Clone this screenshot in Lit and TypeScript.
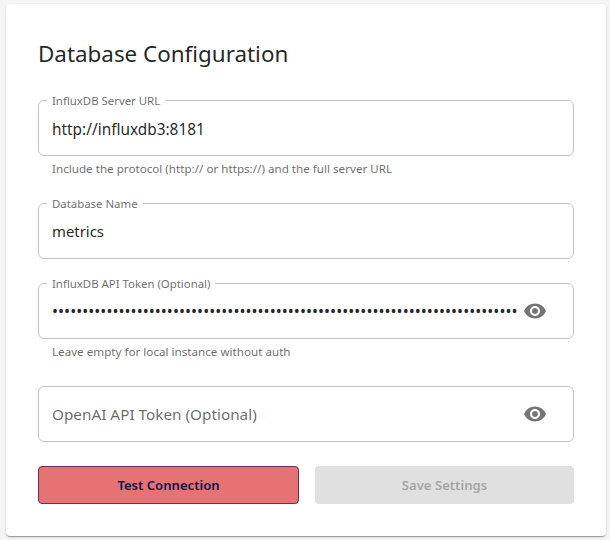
import { LitElement, html, css } from "lit";
import { customElement } from "lit/decorators.js";

const eye = html`<svg class="eye" viewBox="0 0 24 24" width="24" height="24" aria-hidden="true"><path d="M12 4.5C7 4.5 2.73 7.61 1 12c1.73 4.39 6 7.5 11 7.5s9.27-3.11 11-7.5c-1.73-4.39-6-7.5-11-7.5zM12 17c-2.76 0-5-2.24-5-5s2.24-5 5-5 5 2.24 5 5-2.24 5-5 5zm0-8c-1.66 0-3 1.34-3 3s1.34 3 3 3 3-1.34 3-3-1.34-3-3-3z"/></svg>`;

@customElement("app-root")
export class AppRoot extends LitElement {
  static styles = css`
    :host {
      display: block;
      width: 610px;
      height: 540px;
      background: #f5f5f5;
      font-family: "Noto Sans", "Open Sans", sans-serif;
      color: rgba(0, 0, 0, 0.87);
      box-sizing: border-box;
      padding: 4px 4px 4px 6px;
    }
    .card {
      box-sizing: border-box;
      height: 532px;
      background: #fff;
      border-radius: 4px;
      padding: 32px;
      box-shadow: 0 2px 1px -1px rgba(0,0,0,.2), 0 1px 1px 0 rgba(0,0,0,.14), 0 1px 3px 0 rgba(0,0,0,.12);
      display: flex;
      flex-direction: column;
    }
    h1 {
      margin: 0 0 28px;
      font-size: 22.4px;
      font-weight: 400;
      line-height: 36px;
    }
    .field {
      position: relative;
      box-sizing: border-box;
      height: 56px;
      border: 1px solid #c4c4c4;
      border-radius: 6px;
      padding: 0 26px 0 13px;
      display: flex;
      align-items: center;
      font-size: 15.4px;
    }
    .legend {
      position: absolute;
      left: 8px;
      top: -8px;
      padding: 0 5px;
      background: #fff;
      font-size: 11.4px;
      line-height: 16px;
      color: rgba(0, 0, 0, 0.6);
      white-space: nowrap;
    }
    .value { flex: 1; line-height: 24px; white-space: nowrap; overflow: hidden; }
    .url { padding-top: 3px; }
    .short { font-size: 14.9px; }
    .dots { font-size: 16px; letter-spacing: 0.03px; }
    .placeholder { color: rgba(0, 0, 0, 0.6); font-size: 15.3px; }
    .eye { fill: #757575; flex: none; margin-left: 4px; }
    .help {
      margin: 4px 14px 0;
      font-size: 11.65px;
      line-height: 18px;
      color: rgba(0, 0, 0, 0.6);
    }
    .gap-after-help { margin-bottom: 25px; }
    .gap { margin-bottom: 24px; }
    .actions { display: flex; gap: 16px; }
    button {
      font: inherit;
      font-size: 13.1px;
      font-weight: 600;
      height: 38px;
      padding: 0;
      border-radius: 4px;
      box-sizing: border-box;
    }
    .test {
      width: 261px;
      flex: none;
      background: #e57373;
      border: 1px solid #6b2f5f;
      color: #0d1250;
    }
    .save {
      width: 259px;
      flex: none;
      background: #e0e0e0;
      border: none;
      color: #a6a6a6;
    }
  `;

  render() {
    return html`
      <div class="card">
        <h1>Database Configuration</h1>

        <div class="field">
          <span class="legend">InfluxDB Server URL</span>
          <span class="value url">http://influxdb3:8181</span>
        </div>
        <div class="help gap-after-help">Include the protocol (http:// or https://) and the full server URL</div>

        <div class="field gap">
          <span class="legend">Database Name</span>
          <span class="value short">metrics</span>
        </div>

        <div class="field">
          <span class="legend">InfluxDB API Token (Optional)</span>
          <span class="value dots">${"•".repeat(77)}</span>
          ${eye}
        </div>
        <div class="help gap-after-help">Leave empty for local instance without auth</div>

        <div class="field gap">
          <span class="value placeholder">OpenAI API Token (Optional)</span>
          ${eye}
        </div>

        <div class="actions">
          <button class="test">Test Connection</button>
          <button class="save" disabled>Save Settings</button>
        </div>
      </div>
    `;
  }
}
